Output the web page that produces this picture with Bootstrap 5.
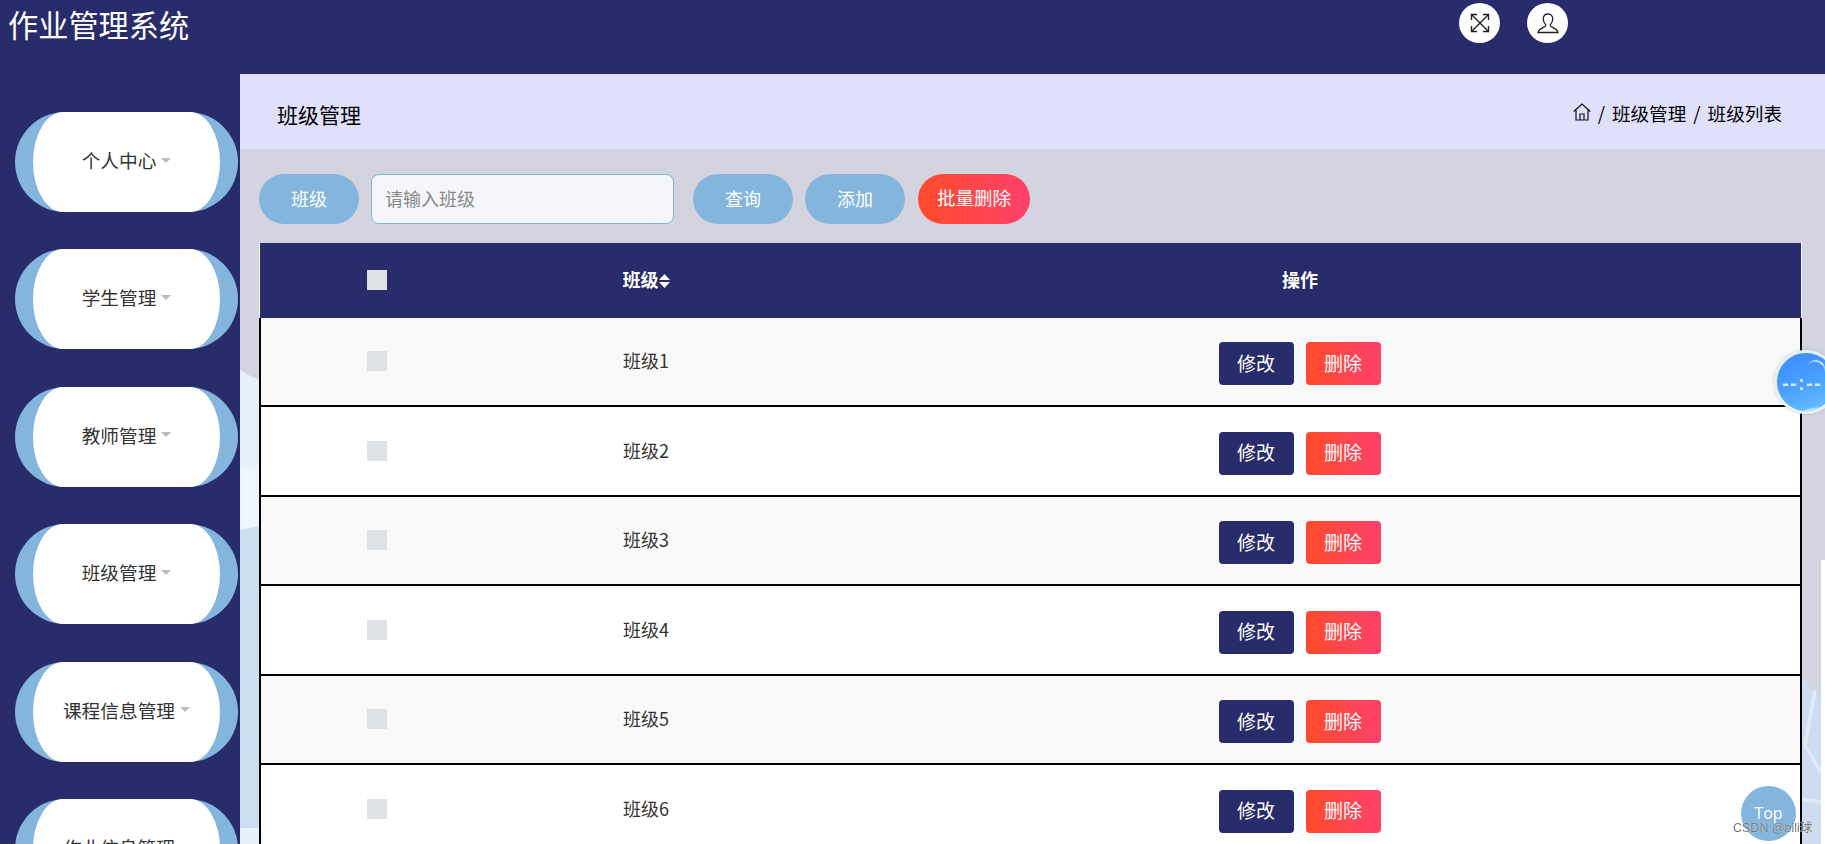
<!DOCTYPE html>
<html lang="zh-CN">
<head>
<meta charset="utf-8">
<title>作业管理系统</title>
<link rel="stylesheet" href="https://cdn.jsdelivr.net/npm/bootstrap@5.3.0/dist/css/bootstrap.min.css">
<style>
html,body{height:100%;overflow:hidden}
body{font-family:"Noto Sans CJK SC","Liberation Sans",sans-serif;font-size:18px;color:#333;background:#fff}
.top-bar{height:74px;background:#282c6b;color:#fff;flex:none}
.app-title{font-size:30.2px;line-height:48px;margin-left:8px;font-weight:400}
.top-tools{margin-right:257px;margin-top:3px;gap:27px}
.round-tool{width:41px;height:40px;border-radius:50%;background:#fff;padding:0;border:0}
.app-body{height:770px}
.side-nav{width:240px;flex:none;background:#282c6b;padding-top:38px;overflow:hidden}
.nav-pill-outer{width:223px;height:100px;margin:0 0 37.4px 15px;background:#83b5dd;border-radius:50px;padding-left:18px}
.nav-pill-inner{width:187px;height:100px;background:#fff;border-radius:30px/50px;color:#333;text-decoration:none;font-size:18.7px;padding-bottom:4px}
.nav-caret{width:0;height:0;border-left:5px solid transparent;border-right:5px solid transparent;border-top:5px solid #bbb;margin-left:5px}
.main-pane{background:#d4d4e0;overflow:hidden}
.decor{position:absolute;left:0;top:0;z-index:0}
.pane-layer{position:relative;z-index:1}
.pane-head{height:75px;background:#e0e0fc;padding:6px 43px 0 37px;color:#000}
.pane-title{font-size:21px;font-weight:400}
.pane-crumbs{font-size:18.6px;margin-bottom:4px}
.crumb-sep{margin:0 7px}
.filter-row{padding:25px 0 0 19px;margin-bottom:19px}
.pill-lbl,.pill-btn{height:50px;width:100px;border-radius:25px;background:#83b5dd;color:#fff;font-size:18px;border:0;padding:0 0 2px}
.pill-btn:hover{background:#83b5dd;color:#fff}
.grad-red,.grad-red:hover{background:linear-gradient(to right,#ff4b2b,#ff416c);color:#fff}
.pill-wide{width:112px;font-size:18.5px}
.filter-input{width:303px;height:50px;margin:0 19px 0 12px;background:#f5f6fa;border:1px solid #83b5dd;border-radius:8px;font-size:18px;padding:0 13px 2px;color:#333}
.filter-input::placeholder{color:#888}
.gap-add{margin-left:12px}
.gap-del{margin-left:13px}
.data-grid{width:1543px;margin-left:19px;table-layout:fixed;border-collapse:separate;border-spacing:0}
.data-grid.table>thead>tr>th{height:74.5px;background:#282c6b;color:#fff;box-shadow:none;border:0;padding:0;text-align:center;vertical-align:middle;font-size:18px;font-weight:700;line-height:1}
.data-grid.table>thead>tr>th.cell-text{padding-bottom:3px}
.data-grid.table>thead>tr>th:first-child{border-left:1px solid #fff}
.data-grid.table>thead>tr>th:last-child{border-right:1px solid #fff}
.data-grid.table>tbody>tr>td{height:89.5px;background:#fff;box-shadow:none;border:0;border-bottom:2px solid #000;padding:0;text-align:center;vertical-align:middle;color:#333;font-size:18px;line-height:1}
.data-grid.table>tbody>tr>td.cell-text{padding-bottom:2px}
.data-grid.table>tbody>tr:nth-child(odd)>td{background:#f9f9f9}
.data-grid.table>tbody>tr>td:first-child{border-left:2px solid #000}
.data-grid.table>tbody>tr>td:last-child{border-right:2px solid #000}
.tick-box{appearance:none;-webkit-appearance:none;display:block;width:20px;height:20px;margin:0 auto;background:#dee2e6;border:0;border-radius:0}
.sort-mark{display:inline-block;vertical-align:-1px;margin-left:0}
.act-btn{width:75px;height:43px;padding:0 0 3px;border:0;border-radius:4px;color:#fff;font-size:19px;line-height:1}
.act-edit,.act-edit:hover{background:#282c6b;color:#fff}
.act-row{gap:12px;margin-top:5px}
.clock-orb{position:fixed;left:1774px;top:350px;width:64px;height:64px;border-radius:50%;border:3px solid #e8f0f6;background:linear-gradient(160deg,#3a8cff 0%,#4a9fff 50%,#6cc4ff 100%);overflow:hidden;color:#cfe8ff;font:700 21px/60px "Liberation Sans",sans-serif;padding-left:5px;letter-spacing:1px;white-space:nowrap;z-index:5;box-shadow:0 0 3px rgba(90,130,170,.4)}
.clock-orb::before{content:"";position:absolute;left:30px;top:7px;width:18px;height:18px;border-radius:50%;border-top:2px solid rgba(255,255,255,.7);transform:rotate(25deg)}
.clock-orb::after{content:"";position:absolute;left:26px;top:54px;width:40px;height:12px;border-radius:50%;background:rgba(205,240,255,.75)}
.to-top{position:fixed;left:1741px;top:786px;width:55px;height:55px;border-radius:50%;background:#83b5dd;color:#fff;font:400 16px/55px "Open Sans",sans-serif;text-align:center;z-index:5}
.csdn-mark{position:fixed;left:1733px;top:820px;font:400 12.5px/16px "Liberation Sans","Noto Sans CJK SC",sans-serif;color:#777;white-space:nowrap;z-index:6;text-shadow:0 0 1px rgba(255,255,255,.8)}
</style>
</head>
<body class="d-flex flex-column">
<header class="top-bar d-flex align-items-start">
  <div class="app-title">作业管理系统</div>
  <div class="top-tools d-flex ms-auto">
    <button class="round-tool d-flex align-items-center justify-content-center" aria-label="全屏">
      <svg width="20" height="20" viewBox="0 0 20 20" fill="none" stroke="#222" stroke-width="1.4"><path d="M2 2 18 18M18 2 2 18"/><path d="M1.5 7V1.5H7M13 1.5h5.5V7M18.5 13v5.5H13M7 18.5H1.5V13"/></svg>
    </button>
    <button class="round-tool d-flex align-items-center justify-content-center" aria-label="用户">
      <svg width="22" height="21" viewBox="0 0 22 21" fill="none" stroke="#222" stroke-width="1.3"><path d="M11 1c-3 0-4.700 2.100-4.700 5 0 2.400 1 4.300 2.300 5.400v1.400c0 1.400-6.800 2.500-7.600 6.700h20c-.8-4.200-7.600-5.300-7.600-6.700v-1.400c1.300-1.100 2.300-3 2.300-5.400C15.700 3.100 14 1 11 1Z"/></svg>
    </button>
  </div>
</header>
<div class="app-body d-flex">
  <nav class="side-nav">
    <div class="nav-pill-outer"><a href="#" class="nav-pill-inner d-flex align-items-center justify-content-center">个人中心<span class="nav-caret"></span></a></div>
    <div class="nav-pill-outer"><a href="#" class="nav-pill-inner d-flex align-items-center justify-content-center">学生管理<span class="nav-caret"></span></a></div>
    <div class="nav-pill-outer"><a href="#" class="nav-pill-inner d-flex align-items-center justify-content-center">教师管理<span class="nav-caret"></span></a></div>
    <div class="nav-pill-outer"><a href="#" class="nav-pill-inner d-flex align-items-center justify-content-center">班级管理<span class="nav-caret"></span></a></div>
    <div class="nav-pill-outer"><a href="#" class="nav-pill-inner d-flex align-items-center justify-content-center">课程信息管理<span class="nav-caret"></span></a></div>
    <div class="nav-pill-outer"><a href="#" class="nav-pill-inner d-flex align-items-center justify-content-center">作业信息管理<span class="nav-caret"></span></a></div>
  </nav>
  <main class="main-pane flex-grow-1 position-relative">
    <svg class="decor" width="1585" height="770" viewBox="240 74 1585 770" aria-hidden="true">
      <path d="M240 370Q250 377 262 380V844H240Z" fill="#e5f0f8"/>
      <path d="M240 466Q250 468 262 472V844H240Z" fill="#edf6fd"/>
      <path d="M240 530Q250 527 262 526V844H240Z" fill="#c9e0ee"/>
      <rect x="240" y="828" width="22" height="16" fill="#e3f2fb"/>
      <path d="M1800 675 1821 698V844H1800Z" fill="#cddcee"/>
      <path d="M1815 690 1805 746 1821 772M1800 799 1821 802" fill="none" stroke="#e0ecf5" stroke-width="3.500"/>
      <rect x="1821" y="560" width="4" height="284" fill="#fff"/>
    </svg>
    <div class="pane-layer">
      <div class="pane-head d-flex align-items-center justify-content-between">
        <div class="pane-title">班级管理</div>
        <div class="pane-crumbs d-flex align-items-center">
          <svg width="18" height="18" viewBox="0 0 18 18" fill="none" stroke="#111" stroke-width="1.200"><path d="M.7 8.500 9 1l8.300 7.500M3 6.800V17h12V6.800M7 17v-6h4v6"/></svg>
          <span class="crumb-sep">/</span><span>班级管理</span><span class="crumb-sep">/</span><span>班级列表</span>
        </div>
      </div>
      <form class="filter-row d-flex" onsubmit="return false">
        <div class="pill-lbl d-flex align-items-center justify-content-center">班级</div>
        <input class="filter-input" type="text" placeholder="请输入班级">
        <button class="btn pill-btn">查询</button>
        <button class="btn pill-btn gap-add">添加</button>
        <button class="btn pill-btn pill-wide grad-red gap-del">批量删除</button>
      </form>
      <table class="table data-grid mb-0">
        <colgroup><col style="width:234px"><col style="width:306px"><col></colgroup>
        <thead>
          <tr>
            <th><input class="tick-box" type="checkbox" aria-label="全选"></th>
            <th class="cell-text">班级<svg class="sort-mark" width="11" height="14" viewBox="0 0 11 14" fill="#fff"><path d="M5.500 0 11 6H0ZM5.500 14 0 8h11Z"/></svg></th>
            <th class="cell-text">操作</th>
          </tr>
        </thead>
        <tbody>
          <tr><td><input class="tick-box" type="checkbox" aria-label="选择"></td><td class="cell-text">班级1</td><td><div class="act-row d-flex justify-content-center"><button class="btn act-btn act-edit">修改</button><button class="btn act-btn grad-red">删除</button></div></td></tr>
          <tr><td><input class="tick-box" type="checkbox" aria-label="选择"></td><td class="cell-text">班级2</td><td><div class="act-row d-flex justify-content-center"><button class="btn act-btn act-edit">修改</button><button class="btn act-btn grad-red">删除</button></div></td></tr>
          <tr><td><input class="tick-box" type="checkbox" aria-label="选择"></td><td class="cell-text">班级3</td><td><div class="act-row d-flex justify-content-center"><button class="btn act-btn act-edit">修改</button><button class="btn act-btn grad-red">删除</button></div></td></tr>
          <tr><td><input class="tick-box" type="checkbox" aria-label="选择"></td><td class="cell-text">班级4</td><td><div class="act-row d-flex justify-content-center"><button class="btn act-btn act-edit">修改</button><button class="btn act-btn grad-red">删除</button></div></td></tr>
          <tr><td><input class="tick-box" type="checkbox" aria-label="选择"></td><td class="cell-text">班级5</td><td><div class="act-row d-flex justify-content-center"><button class="btn act-btn act-edit">修改</button><button class="btn act-btn grad-red">删除</button></div></td></tr>
          <tr><td><input class="tick-box" type="checkbox" aria-label="选择"></td><td class="cell-text">班级6</td><td><div class="act-row d-flex justify-content-center"><button class="btn act-btn act-edit">修改</button><button class="btn act-btn grad-red">删除</button></div></td></tr>
        </tbody>
      </table>
    </div>
  </main>
</div>
<div class="clock-orb">--:--</div>
<div class="to-top">Top</div>
<div class="csdn-mark">CSDN @bili球</div>
<script src="https://cdn.jsdelivr.net/npm/bootstrap@5.3.0/dist/js/bootstrap.bundle.min.js"></script>
</body>
</html>
